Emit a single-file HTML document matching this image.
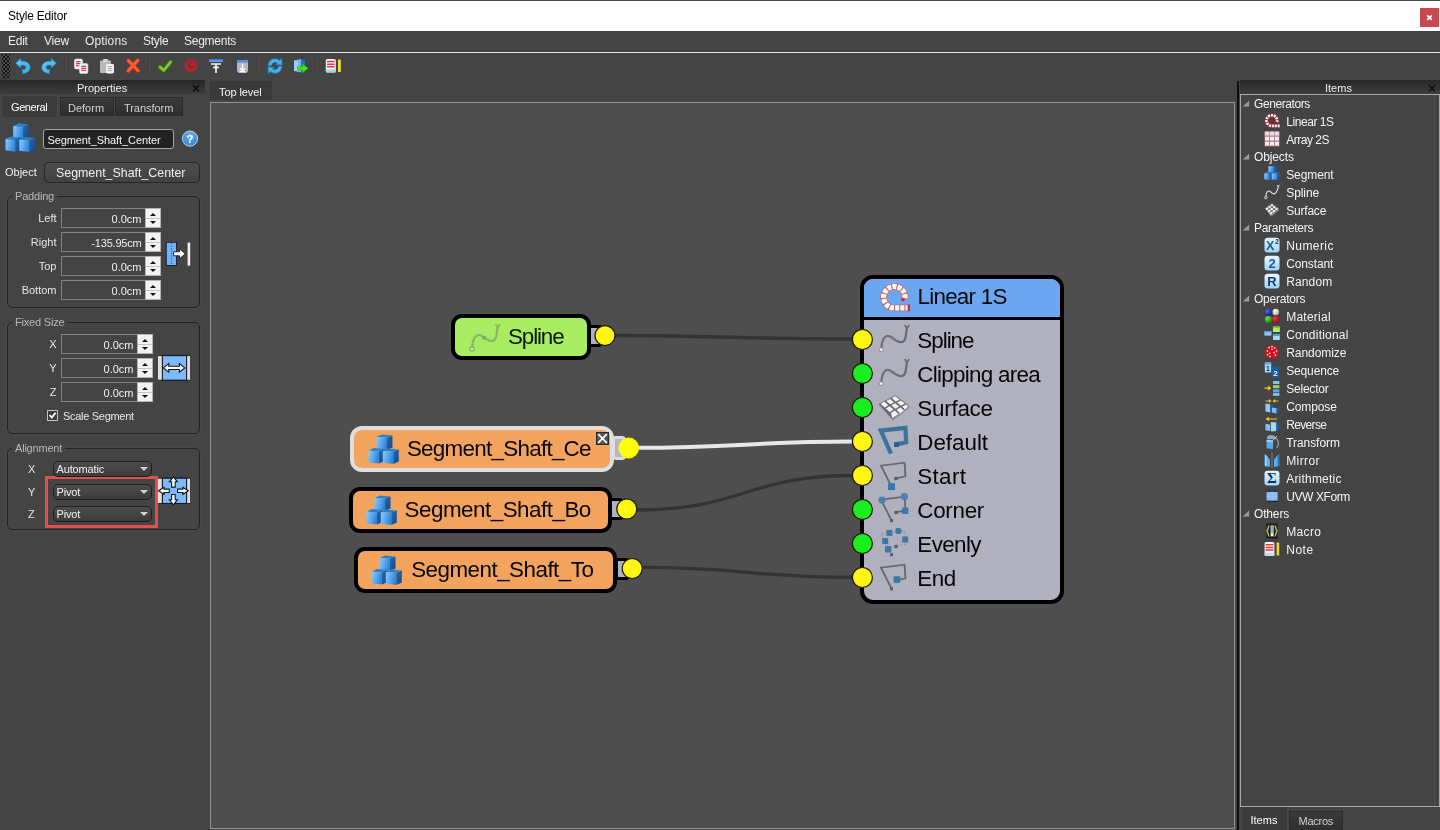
<!DOCTYPE html>
<html lang="en">
<head>
<meta charset="utf-8">
<title>Style Editor</title>
<style>
*{box-sizing:border-box;margin:0;padding:0}
html,body{width:1440px;height:830px;overflow:hidden;background:#444;}
body{font-family:"Liberation Sans","DejaVu Sans",sans-serif;font-size:12px;color:#e4e4e4;position:relative;}
#root{position:absolute;left:0;top:0;width:1440px;height:830px;overflow:hidden;will-change:transform;background:#444}
.abs{position:absolute}
.t{position:absolute;white-space:nowrap;line-height:14px;}
#titlebar{position:absolute;left:0;top:0;width:1440px;height:31px;background:#fff;border-top:1px solid #4a4a4a;}
#titlebar .t{color:#000;left:8px;top:8px;font-size:12px;letter-spacing:-0.2px}
#closebtn{position:absolute;left:1420px;top:8px;width:19px;height:19px;background:#c9474f;}
#menubar{position:absolute;left:0;top:31px;width:1440px;height:21px;background:#444;}
#menubar .t{top:3px;font-size:12px;color:#ececec;letter-spacing:-0.25px}
#menuline{position:absolute;left:0;top:52px;width:1440px;height:1px;background:#e8e8e8;}
#toolbar{position:absolute;left:0;top:53px;width:1440px;height:27px;background:#444;}
.sep{position:absolute;top:4px;width:1px;height:18px;background:#4d4d4d;box-shadow:-1px 0 0 #3e3e3e}
.ico{position:absolute;width:16px;height:16px;}
.hdr{position:absolute;height:14px;background:linear-gradient(#262626,#343434 55%,#3c3c3c);}
.hdr .t{top:0;font-size:12px;color:#f0f0f0;}
.tab{position:absolute;background:linear-gradient(#3a3a3a,#2f2f2f);border:1px solid #2c2c2c;color:#d0d0d0;font-size:12px;}
.tab.on{background:#3b3b3b;color:#fff;border-color:#4a4a4a;border-bottom:none;}
.grp{position:absolute;border:1px solid #222;border-radius:5px;box-shadow:0 0 0 0.5px #4e4e4e}
.grp .lg{position:absolute;top:-8px;left:4px;padding:0 3px;background:#444;color:#b8b8b8;font-size:11px;line-height:14px;white-space:nowrap;letter-spacing:-0.2px}
.lbl{position:absolute;font-size:11px;line-height:14px;color:#e6e6e6;white-space:nowrap;text-align:right}
.num{position:absolute;height:20px;border:1px solid #828282;background:#444;color:#f0f0f0;font-size:11px;line-height:20.5px;text-align:right;padding-right:3.5px;white-space:nowrap}
.spin{position:absolute;width:16px;height:20px;background:#f2f2f2;border:1px solid #b4b4b4;}
.spin:before,.spin:after{content:"";position:absolute;left:4px;border-left:3px solid transparent;border-right:3px solid transparent;}
.spin:before{top:4px;border-bottom:3.5px solid #111;}
.spin:after{bottom:3.5px;border-top:3.5px solid #111;}
.spin i{position:absolute;left:0;right:0;top:8.5px;height:1px;background:#c4c4c4}
.dd{position:absolute;height:16px;border:1px solid #1e1e1e;border-radius:5px;background:linear-gradient(#4c4c4c,#3c3c3c);color:#f2f2f2;font-size:11px;line-height:15.5px;padding-left:2.5px;white-space:nowrap;letter-spacing:-0.15px}
.dd:after{content:"";position:absolute;right:3.5px;top:5px;border-left:4px solid transparent;border-right:4px solid transparent;border-top:4px solid #d2d2d2;}
#canvas{position:absolute;left:210px;top:102px;width:1025px;height:727px;background:#4e4e4e;border:1px solid #929292;}
.node{position:absolute;border:3px solid #000;border-radius:11px;}
.node .t{color:#060606;font-size:22.4px;line-height:24px;}
.li{position:absolute;left:1286.2px;font-size:12px;line-height:14px;color:#f4f4f4;white-space:nowrap;}
.cat{position:absolute;left:1254px;font-size:12px;line-height:14px;color:#f4f4f4;white-space:nowrap;}
.tri{position:absolute;left:1244px;width:0;height:0;border-left:5px solid transparent;border-bottom:5px solid #8a8a8a;}
</style>
</head>
<body>
<div id="root">

<!-- Title bar -->
<div id="titlebar"><span class="t">Style Editor</span>
</div>
<div id="closebtn"><svg width="19" height="19" viewBox="0 0 19 19"><path d="M7.2 7.3 L11.8 11.9 M11.8 7.3 L7.2 11.9" stroke="#fff" stroke-width="1.7" fill="none"/></svg></div>
<!-- Menu bar -->
<div id="menubar">
<span class="t" style="left:8px">Edit</span>
<span class="t" style="left:44px">View</span>
<span class="t" style="left:85px;letter-spacing:0.15px">Options</span>
<span class="t" style="left:143px">Style</span>
<span class="t" style="left:184px">Segments</span>
</div>
<div id="menuline"></div>

<!-- Toolbar -->
<div id="toolbar">
<svg class="abs" style="left:1px;top:1px" width="10" height="25" viewBox="0 0 10 25">
<defs><linearGradient id="ublue" x1="0" y1="0" x2="1" y2="1"><stop offset="0" stop-color="#64d0fc"/><stop offset="1" stop-color="#34a8ea"/></linearGradient><pattern id="grip" width="4" height="4" patternUnits="userSpaceOnUse"><rect x="0" y="0" width="2" height="2" fill="#141414"/><rect x="2" y="2" width="2" height="2" fill="#141414"/></pattern></defs>
<rect x="1" y="0" width="8" height="25" fill="#4e4e4e"/><rect x="1" y="0" width="8" height="25" fill="url(#grip)"/></svg>
<!-- undo -->
<svg class="ico" style="left:15px;top:5px" viewBox="0 0 16 16"><path d="M0.6 5.2 L5.8 0.6 L5.8 3.3 C10.5 2.6 15.4 5 15.2 9.6 C15 13.4 11.6 15.6 7.4 15.4 L7.4 11.6 C9.6 11.8 11 10.8 11 9.3 C11 7.6 8.6 6.7 5.8 7.2 L5.8 9.8 Z" fill="url(#ublue)" stroke="#2a8cc8" stroke-width="0.6"/></svg>
<!-- redo -->
<svg class="ico" style="left:41px;top:5px" viewBox="0 0 16 16"><path d="M15.4 5.2 L10.2 0.6 L10.2 3.3 C5.5 2.6 0.6 5 0.8 9.6 C1 13.4 4.4 15.6 8.6 15.4 L8.6 11.6 C6.4 11.8 5 10.8 5 9.3 C5 7.6 7.4 6.7 10.2 7.2 L10.2 9.8 Z" fill="url(#ublue)" stroke="#2a8cc8" stroke-width="0.6"/></svg>
<div class="sep" style="left:65px"></div>
<!-- copy -->
<svg class="ico" style="left:73px;top:5px" viewBox="0 0 16 16"><rect x="1.5" y="1" width="8" height="10" rx="1.5" fill="#f4f4f4" stroke="#d8e6e6" stroke-width="0.6"/><path d="M3 3.6h4.6M3 5.6h4.6M3 7.6h3" stroke="#e0325a" stroke-width="1.1"/><rect x="6.5" y="5.5" width="8.4" height="10" rx="1.5" fill="#f2f6f6" stroke="#c8dede" stroke-width="0.6"/><path d="M8.2 8.4h5M8.2 10.4h5M8.2 12.4h5" stroke="#e0325a" stroke-width="1.1"/></svg>
<!-- paste -->
<svg class="ico" style="left:99px;top:5px" viewBox="0 0 16 16"><rect x="1" y="2.5" width="11" height="12.5" rx="1" fill="#b9b9b9"/><rect x="4" y="1" width="5" height="3" rx="1" fill="#d4d4d4"/><rect x="7" y="6" width="8" height="9.4" rx="1.4" fill="#f4f4f4"/><path d="M8.6 8.6h4.8M8.6 10.6h4.8M8.6 12.6h4.8" stroke="#a8a8a8" stroke-width="1"/></svg>
<!-- delete -->
<svg class="ico" style="left:125px;top:5px" viewBox="0 0 16 16"><path d="M3.4 2.6 L13 12.6 M12.8 2.4 L3.2 12.8" stroke="#d83828" stroke-width="4" stroke-linecap="round" fill="none"/><path d="M3.4 2.6 L13 12.6 M12.8 2.4 L3.2 12.8" stroke="#f8622e" stroke-width="2.6" stroke-linecap="round" fill="none"/></svg>
<div class="sep" style="left:149px"></div>
<!-- check -->
<svg class="ico" style="left:157px;top:5px" viewBox="0 0 16 16"><path d="M3 9 L6.8 12.4 L13.6 4" stroke="#4e9010" stroke-width="3.8" stroke-linecap="round" stroke-linejoin="round" fill="none"/><path d="M3 9 L6.8 12.4 L13.6 4" stroke="#86cc2c" stroke-width="2.2" stroke-linecap="round" stroke-linejoin="round" fill="none"/></svg>
<!-- stop -->
<svg class="ico" style="left:183px;top:5px" viewBox="0 0 16 16"><circle cx="8" cy="7.6" r="6.8" fill="#b02434" opacity="0.9"/><circle cx="8" cy="7.6" r="2.6" fill="#6a3430"/><circle cx="9" cy="6.4" r="1.2" fill="#e02428"/></svg>
<!-- move top -->
<svg class="ico" style="left:208px;top:5px" viewBox="0 0 16 16"><rect x="1" y="1.4" width="14" height="2.6" fill="#5a9cec"/><rect x="3" y="5" width="10" height="2" fill="#c8c8d4"/><path d="M8 6v9M5.2 9.4h5.6" stroke="#fff" stroke-width="1.6" fill="none"/></svg>
<!-- move bottom -->
<svg class="ico" style="left:234px;top:5px" viewBox="0 0 16 16"><path d="M3 2h11v11l-1.6 2H4.6L3 13z" fill="#b6b6c6"/><rect x="3" y="2" width="11" height="2.6" fill="#5a8cec"/><path d="M8.5 5.6v7M6 10.2l2.5 2.6 2.5-2.6M5.6 13.6h5.8" stroke="#fff" stroke-width="1.4" fill="none"/></svg>
<div class="sep" style="left:258px"></div>
<!-- refresh -->
<svg class="ico" style="left:266px;top:4px;width:18px;height:18px" viewBox="0 0 18 18"><path d="M2.2 8.4 A6.8 6.8 0 0 1 13.6 3.6 L15.6 1.6 L16 8 L9.8 7.6 L11.6 5.8 A4 4 0 0 0 5.4 8.4 Z" fill="#44b6ea" stroke="#2a8cc8" stroke-width="0.9"/><path d="M15.8 9.6 A6.8 6.8 0 0 1 4.4 14.4 L2.4 16.4 L2 10 L8.2 10.4 L6.4 12.2 A4 4 0 0 0 12.6 9.6 Z" fill="#44b6ea" stroke="#2a8cc8" stroke-width="0.9"/></svg>
<!-- export -->
<svg class="ico" style="left:292px;top:5px" viewBox="0 0 16 16"><path d="M2 2.6 L9 1 L9 14.6 L2 13 Z" fill="#78b4f0"/><path d="M9 1 L13 2.4 L13 13.4 L9 14.6 Z" fill="#2a6eb4"/><path d="M2 2.6 L6 3.6 L6 12.4 L2 13 Z" fill="#a0ccf6"/><path d="M5.6 8.8 H10.6 V6 L16.2 10.4 L10.6 14.8 V12 H5.6 Z" fill="#3ce610" stroke="#28b400" stroke-width="0.5"/></svg>
<div class="sep" style="left:316px"></div>
<!-- note -->
<svg class="ico" style="left:325px;top:5px;width:17px" viewBox="0 0 17 16"><rect x="0.8" y="1" width="10" height="13.6" rx="1.6" fill="#f6f6f6"/><rect x="0.8" y="11.6" width="10" height="3" rx="1.2" fill="#9ad8de"/><path d="M2 3.6h7.6M2 6.2h7.6M2 8.8h7.6" stroke="#e4385a" stroke-width="1.5"/><rect x="13" y="1.6" width="2.8" height="12.4" fill="#f0dc3c"/></svg>
</div>

<!-- Properties panel -->
<div class="hdr" style="left:0;top:80px;width:205px"><span class="t" style="left:77px;font-size:11px;line-height:14px;top:0.5px">Properties</span>
<svg class="abs" style="left:191px;top:3px" width="10" height="10" viewBox="0 0 10 10"><path d="M2 2.4 L8 8.4 M8 2.4 L2 8.4" stroke="#101010" stroke-width="1.5"/></svg></div>
<div class="tab on" style="left:1px;top:95px;width:57px;height:22px"><span class="t" style="left:9px;top:4px;font-size:11px;letter-spacing:-0.4px">General</span></div>
<div class="tab" style="left:60px;top:97px;width:54px;height:19px"><span class="t" style="left:7px;top:2.5px;font-size:11px">Deform</span></div>
<div class="tab" style="left:115px;top:97px;width:68px;height:19px"><span class="t" style="left:8px;top:2.5px;font-size:11px;letter-spacing:-0.05px">Transform</span></div>

<!-- segment icon big -->
<svg class="abs" style="left:4.5px;top:122px" width="31" height="31" viewBox="0 0 32 32">
<defs>
<linearGradient id="cbL" x1="0" y1="0" x2="1" y2="0.3"><stop offset="0" stop-color="#86ccfc"/><stop offset="0.55" stop-color="#58a8f0"/><stop offset="1" stop-color="#3484d6"/></linearGradient>
<linearGradient id="cbR" x1="0" y1="0" x2="1" y2="1"><stop offset="0" stop-color="#2468b2"/><stop offset="1" stop-color="#154a88"/></linearGradient>
<g id="cube"><path d="M0 3 L5.5 0.4 L16 1.5 L10.5 3.8 Z" fill="#2f80ca"/><path d="M0 3 L10.5 3.8 L10.5 16 L0 14.6 Z" fill="url(#cbL)"/><path d="M10.5 3.8 L16 1.5 L16 13.4 L10.5 16 Z" fill="url(#cbR)"/></g>
<g id="cubes"><use href="#cube" x="8.5" y="1"/><use href="#cube" x="0.5" y="14.6"/><use href="#cube" x="14.8" y="15"/></g>
</defs>
<use href="#cubes"/>
</svg>
<div class="abs" style="left:43px;top:129px;width:131px;height:20px;border:1px solid #a4a4a4;border-radius:3px;background:#222"><span class="t" style="left:3.5px;top:2.5px;font-size:11px;color:#f6f6f6;letter-spacing:-0.1px">Segment_Shaft_Center</span></div>
<!-- help -->
<svg class="abs" style="left:181px;top:130px" width="18" height="18" viewBox="0 0 18 18"><defs><radialGradient id="hg" cx="0.5" cy="0.3" r="0.8"><stop offset="0" stop-color="#6cb4f0"/><stop offset="1" stop-color="#2a78c8"/></radialGradient></defs><circle cx="9" cy="8.6" r="7.6" fill="url(#hg)" stroke="#b4d8f4" stroke-width="1"/><text x="9" y="12.6" text-anchor="middle" font-family="Liberation Sans, sans-serif" font-weight="bold" font-size="11.5" fill="#fff">?</text></svg>
<span class="lbl" style="left:5px;top:165px;text-align:left;color:#f0f0f0">Object</span>
<div class="abs" style="left:44px;top:162px;width:156px;height:21px;border:1px solid #262626;border-radius:5px;background:linear-gradient(#4c4c4c,#424242)"><span class="t" style="left:11px;top:2.5px;font-size:12.4px;color:#f0f0f0">Segment_Shaft_Center</span></div>

<!-- Padding -->
<div class="grp" style="left:7px;top:196px;width:193px;height:112px"><span class="lg">Padding</span></div>
<span class="lbl" style="left:9.5px;width:47px;top:211px">Left</span>
<span class="lbl" style="left:9.5px;width:47px;top:235px">Right</span>
<span class="lbl" style="left:9.5px;width:47px;top:259px">Top</span>
<span class="lbl" style="left:9.5px;width:47px;top:283px">Bottom</span>
<div class="num" style="left:61px;top:208px;width:85px">0.0cm</div><div class="spin" style="left:145px;top:208px"><i></i></div>
<div class="num" style="left:61px;top:232px;width:85px"><span style="letter-spacing:-0.2px">-135.95cm</span></div><div class="spin" style="left:145px;top:232px"><i></i></div>
<div class="num" style="left:61px;top:256px;width:85px">0.0cm</div><div class="spin" style="left:145px;top:256px"><i></i></div>
<div class="num" style="left:61px;top:280px;width:85px">0.0cm</div><div class="spin" style="left:145px;top:280px"><i></i></div>
<svg class="abs" style="left:165px;top:242px" width="26" height="24" viewBox="0 0 26 24"><rect x="1.2" y="0.3" width="10.4" height="23.2" fill="#74b2f8" stroke="#10182a" stroke-width="0.9"/><path d="M6.6 1v22" stroke="#2a4a90" stroke-width="1" stroke-dasharray="1 1.5"/><path d="M8.6 9.8 h6 v-3 l5.6 5 l-5.6 5 v-3 h-6 z" fill="#fff" stroke="#1a1a1a" stroke-width="0.9"/><rect x="22.6" y="0.6" width="2.6" height="23" fill="#f0f0f0"/></svg>

<!-- Fixed Size -->
<div class="grp" style="left:7px;top:322px;width:193px;height:112px"><span class="lg">Fixed Size</span></div>
<span class="lbl" style="left:9.5px;width:47px;top:337px">X</span>
<span class="lbl" style="left:9.5px;width:47px;top:361px">Y</span>
<span class="lbl" style="left:9.5px;width:47px;top:385px">Z</span>
<div class="num" style="left:61px;top:334px;width:77px">0.0cm</div><div class="spin" style="left:137px;top:334px"><i></i></div>
<div class="num" style="left:61px;top:358px;width:77px">0.0cm</div><div class="spin" style="left:137px;top:358px"><i></i></div>
<div class="num" style="left:61px;top:382px;width:77px">0.0cm</div><div class="spin" style="left:137px;top:382px"><i></i></div>
<svg class="abs" style="left:158px;top:355px" width="32" height="26" viewBox="0 0 32 26"><rect x="0" y="0.6" width="32" height="24.6" fill="#e2dede"/><path d="M0 0.6h32M0 25.2h32" stroke="#1a1a1a" stroke-width="0.9"/><rect x="4.4" y="0.6" width="24.2" height="24.6" fill="#7cbafa" stroke="#10182a" stroke-width="1.1"/><path d="M5.4 12.9 l5.4 -4.3 v2.7 h10.6 v-2.7 l5.4 4.3 l-5.4 4.3 v-2.7 h-10.6 v2.7 z" fill="#fcfcf8" stroke="#10141c" stroke-width="1.1" stroke-linejoin="miter"/></svg>
<div class="abs" style="left:47px;top:410px;width:11px;height:11px;background:#3c3c3c;border:1px solid #c4c4c4"><svg class="abs" style="left:0;top:0" width="9" height="9" viewBox="0 0 9.5 9.5"><path d="M1.8 4.2 L4 7 L8 1.8" stroke="#fff" stroke-width="1.9" fill="none"/></svg></div>
<span class="lbl" style="left:63px;top:409px;text-align:left;letter-spacing:-0.3px">Scale Segment</span>

<!-- Alignment -->
<div class="grp" style="left:7px;top:448px;width:193px;height:82px"><span class="lg">Alignment</span></div>
<span class="lbl" style="left:28px;top:462px;text-align:left">X</span>
<span class="lbl" style="left:28px;top:485px;text-align:left">Y</span>
<span class="lbl" style="left:28px;top:507px;text-align:left">Z</span>
<div class="abs" style="left:45px;top:476px;width:113px;height:52px;border:3px solid #e2504e"></div>
<div class="dd" style="left:53px;top:460.5px;width:99px">Automatic</div>
<div class="dd" style="left:53px;top:483.5px;width:99px">Pivot</div>
<div class="dd" style="left:53px;top:506px;width:99px">Pivot</div>
<svg class="abs" style="left:158px;top:476px" width="32" height="30" viewBox="0 0 32 30"><rect x="0" y="2.2" width="32" height="25.3" fill="#e2dede"/><path d="M0 2.2h32M0 27.5h32" stroke="#1a1a1a" stroke-width="0.9"/><rect x="4.4" y="2.2" width="24.2" height="25.3" fill="#7cbafa" stroke="#10182a" stroke-width="1.1"/>
<g fill="#fcfcf8" stroke="#10141c" stroke-width="1.1"><path d="M15.4 0.7 L19.4 5.8 L17.2 5.8 L17.2 11.1 L13.6 11.1 L13.6 5.8 L11.4 5.8 Z"/><path d="M15.4 28.9 L19.4 23.8 L17.2 23.8 L17.2 18.5 L13.6 18.5 L13.6 23.8 L11.4 23.8 Z"/><path d="M0.6 14.8 L6 11.2 L6 13.1 L11.3 13.1 L11.3 16.5 L6 16.5 L6 18.4 Z"/><path d="M30.3 14.8 L24.9 11.2 L24.9 13.1 L19.6 13.1 L19.6 16.5 L24.9 16.5 L24.9 18.4 Z"/></g></svg>

<!-- Center: tab + canvas -->
<div class="abs" style="left:210px;top:81px;width:62px;height:19px;background:#3a3a3a;"><span class="t" style="left:9px;top:4px;font-size:11px;color:#f4f4f4;letter-spacing:-0.1px">Top level</span></div>
<div id="canvas"></div>

<!-- wires & ports -->
<svg class="abs" style="left:0;top:0" width="1440" height="830" viewBox="0 0 1440 830">
<g fill="none" stroke-width="3.4" stroke-linecap="butt">
<path d="M612 335.5 C 733 335.5, 733 339, 854 339" stroke="#333"/>
<path d="M636 510 C 744 510, 746 475.5, 854 475.5" stroke="#333"/>
<path d="M640 567.4 C 748 567.4, 746 577.3, 854 577.3" stroke="#333"/>
<path d="M636 447.8 C 740 447.8, 750 441.6, 854 441.6" stroke="#e8e8e8" stroke-width="4"/>
</g>
</svg>

<!-- Spline node -->
<div class="abs" style="left:588px;top:325px;width:14px;height:21.5px;background:#b0b0c0;border:3px solid #000;border-radius:3px"></div>
<div class="node" style="left:451px;top:314px;width:140px;height:46px;background:#a8ec62;border-width:4px"><span class="t" style="left:53.0px;top:6.5px;color:#0a1400;letter-spacing:-1.13px">Spline</span>
<svg class="abs" style="left:11.5px;top:3.5px" width="36" height="32" viewBox="0 0 36 32"><g opacity="0.8"><path d="M5.2 25.5 C 5.6 18, 7 14, 11 13 C 15 12.5, 17 16, 21 18 C 25 20, 28 19, 29.2 14.5 C 30 10.5, 30.3 7.5, 30.8 4" fill="none" stroke="#7ea86a" stroke-width="2.2"/><circle cx="5" cy="27" r="2.2" fill="#d4f4b4" stroke="#7c9c6c" stroke-width="1.2"/><path d="M28.4 2 l2.4 3.6 l2.4 -3.6" fill="none" stroke="#7ea86a" stroke-width="1.6"/><rect x="15.6" y="14.2" width="3.2" height="3.2" fill="#6c8c88"/></g></svg>
</div>

<!-- Segment nodes -->
<div class="abs" style="left:612px;top:436px;width:14px;height:24px;background:#b4b4c4;border:3px solid #dcdcdc;border-radius:4px"></div>
<div class="node" style="left:350px;top:426px;width:264px;height:46px;background:#f2a45e;border-color:#dcdee0;border-width:4px;border-radius:12px"><span class="t" style="left:52.9px;top:6.5px;letter-spacing:-0.72px">Segment_Shaft_Ce</span>
<svg class="abs" style="left:14px;top:3px" width="32" height="32" viewBox="0 0 32 32"><use href="#cubes"/></svg>
<div class="abs" style="left:242px;top:2px;width:13px;height:13px;background:#555;border:1px solid #2a2a2a"><svg class="abs" style="left:0;top:0" width="11" height="11" viewBox="0 0 11 11"><path d="M1.2 1.2 L9.8 9.8 M9.8 1.2 L1.2 9.8" stroke="#fff" stroke-width="1.7"/></svg></div>
</div>

<div class="abs" style="left:609px;top:498px;width:14px;height:22px;background:#b0b0c0;border:3px solid #000;border-radius:3px"></div>
<div class="node" style="left:349px;top:487px;width:263px;height:46px;background:#f2a45e;border-width:4px"><span class="t" style="left:51.6px;top:6.5px;letter-spacing:-0.5px">Segment_Shaft_Bo</span>
<svg class="abs" style="left:13px;top:3px" width="32" height="32" viewBox="0 0 32 32"><use href="#cubes"/></svg>
</div>

<div class="abs" style="left:614.5px;top:558px;width:14.5px;height:22px;background:#b0b0c0;border:3px solid #000;border-radius:3px"></div>
<div class="node" style="left:354px;top:547px;width:263px;height:46px;background:#f2a45e;border-width:4px"><span class="t" style="left:53.2px;top:6.5px;letter-spacing:-0.52px">Segment_Shaft_To</span>
<svg class="abs" style="left:13px;top:3px" width="32" height="32" viewBox="0 0 32 32"><use href="#cubes"/></svg>
</div>

<!-- Linear 1S node -->
<div class="node" style="left:860px;top:275px;width:204px;height:329px;background:#b0b0be;border-width:4px;border-radius:13px;overflow:hidden">
<div class="abs" style="left:0;top:0;width:196px;height:38px;background:#6ca6f0"></div>
<div class="abs" style="left:0;top:38px;width:196px;height:3.4px;background:#000"></div>
<span class="t" style="left:53.5px;top:5.5px;letter-spacing:-0.75px">Linear 1S</span>
<span class="t" style="left:53.3px;top:49.5px;letter-spacing:-1.01px">Spline</span>
<span class="t" style="left:53.3px;top:83.5px;letter-spacing:-0.71px">Clipping area</span>
<span class="t" style="left:53.3px;top:117.5px;letter-spacing:-0.24px">Surface</span>
<span class="t" style="left:53.3px;top:151.5px;letter-spacing:-0.03px">Default</span>
<span class="t" style="left:53.3px;top:185.5px;letter-spacing:0.33px">Start</span>
<span class="t" style="left:53.3px;top:219.5px;letter-spacing:-0.29px">Corner</span>
<span class="t" style="left:53.3px;top:253.5px;letter-spacing:-0.59px">Evenly</span>
<span class="t" style="left:53.3px;top:287.5px;letter-spacing:-0.44px">End</span>
</div>

<svg class="abs" style="left:0;top:0" width="1440" height="830" viewBox="0 0 1440 830">
<defs>
<g id="isp"><path d="M2.4 23.5 C 2.8 17, 4 12.5, 8 11.5 C 12 11, 14 14.5, 18 16.5 C 22 18.5, 25.5 18, 26.5 13 C 27.3 9, 27.5 6, 28 2.5" fill="none" stroke="#6c6c76" stroke-width="2.2"/><path d="M25.8 0.5 L28 4 L30.2 0.5" fill="none" stroke="#6c6c76" stroke-width="1.7"/><rect x="12.5" y="12.4" width="3" height="3" fill="#7a7a90"/><circle cx="2.2" cy="25.2" r="1.9" fill="#f4f4f8" stroke="#8a8a98" stroke-width="1"/></g>
<path id="ipoly" d="M12.5 26 L2 5.2 L25.6 2.2 L26.4 15.8 L17 17.9" fill="none"/>
</defs>
<use href="#isp" x="879" y="324.5"/>
<use href="#isp" x="879" y="358.5"/>
<!-- surface -->
<g transform="translate(878,394)"><path d="M0.5 10 L17.5 1.2 L31.2 12 L14 25.2 Z" fill="#6a6a6e"/><path d="M14 25.2 L31.2 12 L31.2 14 L14.4 27 Z" fill="#8a8a92"/>
<g fill="#f4f4f4"><path d="M2.6 9.8 L6.4 7.8 L10.4 11.2 L6.6 13.4 Z"/><path d="M8.2 6.9 L12 4.9 L16 8.3 L12.2 10.3 Z"/><path d="M13.8 4 L17.4 2.2 L21.6 5.4 L17.8 7.4 Z"/>
<path d="M7.8 14.4 L11.6 12.2 L15.6 15.6 L11.8 18 Z"/><path d="M13.4 11.3 L17.2 9.3 L21.2 12.6 L17.4 14.7 Z"/><path d="M19 8.4 L22.8 6.4 L26.8 9.6 L23 11.7 Z"/>
<path d="M13 19 L16.8 16.6 L20.6 20 L14.2 24 Z"/><path d="M18.6 15.7 L22.4 13.6 L26 16.6 L22 19.4 Z"/><path d="M24.2 12.7 L28 10.6 L30.2 12.2 L27.2 15.6 Z"/></g></g>
<!-- default -->
<g transform="translate(879,427)"><path d="M12 26.6 L1.8 3.6 L26.4 0.8 L27.2 15.4 L17.4 17.4" fill="none" stroke="#3a739c" stroke-width="4.2" stroke-linejoin="miter"/><rect x="15" y="15" width="5" height="5" fill="#2c628c"/></g>
<!-- start -->
<g transform="translate(879,460.5)"><use href="#ipoly" stroke="#686872" stroke-width="1.8"/><rect x="15.4" y="16.4" width="3.2" height="3.2" fill="#5a5a68"/><rect x="9" y="22.6" width="7" height="7" fill="#3a78a8"/></g>
<!-- corner -->
<g transform="translate(879,494.5)"><use href="#ipoly" stroke="#686872" stroke-width="1.8"/><circle cx="3" cy="5.6" r="3.6" fill="#4a82b4"/><circle cx="25.4" cy="2.2" r="3.6" fill="#4a82b4"/><rect x="23" y="13" width="6.4" height="6.4" fill="#3a78a8"/><rect x="15.4" y="16.4" width="3.2" height="3.2" fill="#5a5a68"/><rect x="11" y="24.6" width="3" height="3" fill="#5a5a68"/></g>
<!-- evenly -->
<g transform="translate(879,528.5)"><use href="#ipoly" stroke="#8a8a98" stroke-width="1" stroke-dasharray="2 2"/><g fill="#3a78a8"><rect x="7.4" y="1.4" width="6" height="6"/><rect x="16.4" y="-0.4" width="6" height="6" rx="2"/><rect x="23.2" y="8" width="6" height="6"/><rect x="3.2" y="9.6" width="6" height="6"/><rect x="6" y="17.6" width="6.4" height="6.4"/></g><rect x="15.4" y="16.4" width="3.2" height="3.2" fill="#5a5a68"/><rect x="11" y="24.8" width="3" height="3" fill="#5a5a68"/></g>
<!-- end -->
<g transform="translate(879,562.5)"><use href="#ipoly" stroke="#686872" stroke-width="1.8"/><rect x="14.6" y="13.8" width="6.6" height="6.6" fill="#3a78a8"/><rect x="11" y="24.8" width="3" height="3" fill="#5a5a68"/></g>
<!-- header icon -->
<g transform="translate(879,282)" fill="none"><path d="M30.6 25.9 L15.3 25.95 A10.75 10.75 0 1 1 25.9 17.4" stroke="#b8686c" stroke-width="6.6"/><path d="M30.6 25.9 L15.3 25.95 A10.75 10.75 0 1 1 25.9 17.4" stroke="#f8f6f6" stroke-width="5.2" stroke-dasharray="4.1 1.1"/><circle cx="24" cy="17.6" r="1.9" fill="#e0243c"/><rect x="28.6" y="22.5" width="2.4" height="6.6" fill="#e02838"/></g>
<g stroke="#1a1a00" stroke-width="1.2">
<circle cx="605" cy="335.6" r="10" fill="#fff614"/>
<circle cx="628.7" cy="448" r="10.4" fill="#fefe06" stroke="none"/>
<circle cx="626.8" cy="509" r="10" fill="#fff614"/>
<circle cx="632.2" cy="568.5" r="10" fill="#fff614"/>
<circle cx="862.4" cy="339.5" r="10" fill="#fff614"/>
<circle cx="862.4" cy="373.5" r="10" fill="#1aee22"/>
<circle cx="862.4" cy="407.5" r="10" fill="#1aee22"/>
<circle cx="862.4" cy="441.5" r="10" fill="#fff614"/>
<circle cx="862.4" cy="475.5" r="10" fill="#fff614"/>
<circle cx="862.4" cy="509.5" r="10" fill="#1aee22"/>
<circle cx="862.4" cy="543.5" r="10" fill="#1aee22"/>
<circle cx="862.4" cy="577.5" r="10" fill="#fff614"/>
</g>
</svg>

<!-- Items panel -->
<svg class="abs" width="0" height="0" style="left:0;top:0"><defs>
<linearGradient id="bdg" x1="0" y1="0" x2="0" y2="1"><stop offset="0" stop-color="#e8f6ff"/><stop offset="0.5" stop-color="#c4e6fc"/><stop offset="1" stop-color="#9ed4f8"/></linearGradient>
<radialGradient id="sB" cx="0.35" cy="0.3" r="0.8"><stop offset="0" stop-color="#4a6af8"/><stop offset="1" stop-color="#0a148c"/></radialGradient>
<radialGradient id="sW" cx="0.35" cy="0.3" r="0.8"><stop offset="0" stop-color="#ffffee"/><stop offset="1" stop-color="#b4b48c"/></radialGradient>
<radialGradient id="sG" cx="0.35" cy="0.3" r="0.8"><stop offset="0" stop-color="#5af03a"/><stop offset="1" stop-color="#0a780a"/></radialGradient>
<radialGradient id="sR" cx="0.35" cy="0.3" r="0.8"><stop offset="0" stop-color="#f83a3a"/><stop offset="1" stop-color="#8c0a0a"/></radialGradient>
</defs></svg>
<div class="abs" style="left:1237px;top:81px;width:2px;height:749px;background:#0e0e0e"></div>
<div class="hdr" style="left:1239.5px;top:80px;width:201px"><span class="t" style="left:85.5px;font-size:11px;top:0.5px">Items</span><svg class="abs" style="left:187px;top:3px" width="10" height="10" viewBox="0 0 10 10"><path d="M2 2.4 L8 8.4 M8 2.4 L2 8.4" stroke="#101010" stroke-width="1.5"/></svg></div>
<div class="abs" style="left:1240px;top:94px;width:200px;height:713px;border:1px solid #a8a8a8;background:#444"></div>
<div class="abs" style="left:1434px;top:95px;width:1px;height:711px;background:#505050"></div>
<svg class="abs" style="left:1242px;top:99.5px" width="8" height="7" viewBox="0 0 8 7"><path d="M7.2 0.4 L7.2 6.4 L0.8 6.4 Z" fill="#9a9a9a"/></svg><span class="cat" style="top:96.5px;letter-spacing:-0.42px">Generators</span>
<span class="li" style="top:114.5px;letter-spacing:-0.43px">Linear 1S</span>
<svg class="ico" style="left:1264px;top:113px" viewBox="0 0 16 16"><circle cx="7.8" cy="7.6" r="4.4" fill="#6e2c2e"/><g fill="none"><path d="M15.6 12.9 L7.8 12.95 A5.35 5.35 0 1 1 13 8.9" stroke="#8e2c32" stroke-width="4"/><path d="M15.6 12.9 L7.8 12.95 A5.35 5.35 0 1 1 13 8.9" stroke="#fbf6f6" stroke-width="2.7" stroke-dasharray="2 0.9"/></g></svg>
<span class="li" style="top:132.5px;letter-spacing:-0.47px">Array 2S</span>
<svg class="ico" style="left:1264px;top:131px" viewBox="0 0 16 16"><rect x="0.6" y="0.6" width="14.8" height="14.8" fill="#d07468"/><g fill="#f4ecf2"><rect x="1" y="0.6" width="4" height="4"/><rect x="6" y="0.6" width="4" height="4"/><rect x="11" y="0.6" width="4" height="4"/><rect x="1" y="5.6" width="4" height="4"/><rect x="6" y="5.6" width="4" height="4"/><rect x="11" y="5.6" width="4" height="4"/><rect x="1" y="10.6" width="4" height="4"/><rect x="6" y="10.6" width="4" height="4"/><rect x="11" y="10.6" width="4" height="4"/></g><path d="M0.6 5.1h15M0.6 10.1h15M5.5 0.6v14.4M10.5 0.6v14.4" stroke="#a89098" stroke-width="0.9"/><rect x="0.6" y="0.6" width="14.8" height="4.2" fill="#d8b4d8" opacity="0.35"/></svg>
<svg class="abs" style="left:1242px;top:152.5px" width="8" height="7" viewBox="0 0 8 7"><path d="M7.2 0.4 L7.2 6.4 L0.8 6.4 Z" fill="#9a9a9a"/></svg><span class="cat" style="top:149.5px;letter-spacing:-0.12px">Objects</span>
<span class="li" style="top:167.5px;letter-spacing:-0.1px">Segment</span>
<svg class="ico" style="left:1264px;top:166px" viewBox="0 0 16 16"><g transform="translate(0,-2) scale(0.52)"><use href="#cubes"/></g></svg>
<span class="li" style="top:185.5px;letter-spacing:-0.06px">Spline</span>
<svg class="ico" style="left:1264px;top:184px" viewBox="0 0 16 16"><path d="M1.8 13 C 1.6 7.6, 4.6 5.6, 7 8.2 S 11.6 10.6, 13.2 6.4 S 14 3, 14.4 1.6" fill="none" stroke="#e6e6e6" stroke-width="1.1"/><circle cx="1.8" cy="13.6" r="1.2" fill="#444" stroke="#e6e6e6" stroke-width="0.9"/><path d="M13 1 l1.3 1.8 l1.3 -1.8" fill="none" stroke="#e6e6e6" stroke-width="0.8"/></svg>
<span class="li" style="top:203.5px;letter-spacing:-0.2px">Surface</span>
<svg class="ico" style="left:1264px;top:202px" viewBox="0 0 16 16"><path d="M0.8 6.4 L8 1.4 L15 7 L6.6 13.6 Z" fill="#f2f2f2"/><path d="M3.2 4.8 L9.6 11.2 M5.6 3.1 L12.4 9 M0.8 6.4 L6.6 13.6 M8 1.4 L15 7 M2.8 8.8 L10.4 3.4 M4.7 11.2 L12.7 5.2 M0.8 6.4 L8 1.4 M6.6 13.6 L15 7" stroke="#585858" stroke-width="0.9" fill="none"/><path d="M6.6 13.6 L15 7 L15 8.2 L6.8 14.8 Z" fill="#8a8a8a"/></svg>
<svg class="abs" style="left:1242px;top:223.5px" width="8" height="7" viewBox="0 0 8 7"><path d="M7.2 0.4 L7.2 6.4 L0.8 6.4 Z" fill="#9a9a9a"/></svg><span class="cat" style="top:220.5px;letter-spacing:-0.29px">Parameters</span>
<span class="li" style="top:238.5px;letter-spacing:0.43px">Numeric</span>
<svg class="ico" style="left:1264px;top:237px" viewBox="0 0 16 16"><rect x="0.5" y="0.8" width="15" height="14.6" rx="3.2" fill="url(#bdg)"/><text x="6.2" y="13" text-anchor="middle" font-family="Liberation Sans, sans-serif" font-weight="bold" font-size="12.5" fill="#1c5a9c">X</text><text x="13" y="7.2" text-anchor="middle" font-family="Liberation Sans, sans-serif" font-weight="bold" font-size="7" fill="#102a50">2</text></svg>
<span class="li" style="top:256.5px;letter-spacing:-0.11px">Constant</span>
<svg class="ico" style="left:1264px;top:255px" viewBox="0 0 16 16"><rect x="0.5" y="0.8" width="15" height="14.6" rx="3.2" fill="url(#bdg)"/><text x="8" y="13.2" text-anchor="middle" font-family="Liberation Sans, sans-serif" font-weight="bold" font-size="13" fill="#1c5a9c">2</text></svg>
<span class="li" style="top:274.5px;letter-spacing:0.14px">Random</span>
<svg class="ico" style="left:1264px;top:273px" viewBox="0 0 16 16"><rect x="0.5" y="0.8" width="15" height="14.6" rx="3.2" fill="url(#bdg)"/><text x="8" y="13.2" text-anchor="middle" font-family="Liberation Sans, sans-serif" font-weight="bold" font-size="13" fill="#103c70">R</text></svg>
<svg class="abs" style="left:1242px;top:294.5px" width="8" height="7" viewBox="0 0 8 7"><path d="M7.2 0.4 L7.2 6.4 L0.8 6.4 Z" fill="#9a9a9a"/></svg><span class="cat" style="top:291.5px;letter-spacing:-0.24px">Operators</span>
<span class="li" style="top:309.5px;letter-spacing:0.24px">Material</span>
<svg class="ico" style="left:1264px;top:308px" viewBox="0 0 16 16"><circle cx="4.4" cy="4.4" r="3.6" fill="url(#sB)"/><circle cx="11.8" cy="4" r="3.2" fill="url(#sW)"/><circle cx="4.4" cy="11.6" r="3.6" fill="url(#sG)"/><circle cx="11.8" cy="11.6" r="3.6" fill="url(#sR)"/></svg>
<span class="li" style="top:327.5px;letter-spacing:0.22px">Conditional</span>
<svg class="ico" style="left:1264px;top:326px" viewBox="0 0 16 16"><rect x="0.4" y="5" width="7" height="4.6" fill="#8cccf4"/><rect x="0.4" y="5" width="7" height="1.4" fill="#4a9ae0"/><rect x="9" y="0.6" width="6.8" height="5.4" fill="#b4f06a"/><rect x="9" y="0.6" width="6.8" height="1.6" fill="#6cd22a"/><rect x="9" y="8.4" width="6.8" height="5.6" fill="#a8d8f8"/><rect x="9" y="8.4" width="6.8" height="1.6" fill="#4a9ae0"/></svg>
<span class="li" style="top:345.5px;letter-spacing:-0.06px">Randomize</span>
<svg class="ico" style="left:1264px;top:344px" viewBox="0 0 16 16"><path d="M8 0.8 L14.4 4.2 L14 11.4 L8 15.2 L1.8 11.4 L1.6 4.2 Z" fill="#e4121e"/><path d="M8 7.6 L14.4 4.2 M8 7.6 L1.6 4.2 M8 7.6 L8 15.2" stroke="#a80a14" stroke-width="0.8"/><g fill="#fff"><circle cx="5" cy="3.6" r="0.8"/><circle cx="8" cy="2.6" r="0.8"/><circle cx="10.8" cy="4" r="0.8"/><circle cx="8" cy="5.2" r="0.8"/><circle cx="3.4" cy="7" r="0.8"/><circle cx="5.8" cy="9.2" r="0.8"/><circle cx="3.6" cy="10.8" r="0.8"/><circle cx="6" cy="12.6" r="0.8"/><circle cx="10" cy="8.6" r="0.8"/><circle cx="12.6" cy="7" r="0.8"/><circle cx="11.4" cy="11" r="0.8"/></g></svg>
<span class="li" style="top:363.5px;letter-spacing:-0.14px">Sequence</span>
<svg class="ico" style="left:1264px;top:362px" viewBox="0 0 16 16"><rect x="0.8" y="0.6" width="6.4" height="10" rx="0.8" fill="#a4d8f8"/><rect x="0.8" y="0.6" width="6.4" height="2" fill="#5ab0ee"/><text x="4" y="9" text-anchor="middle" font-family="Liberation Sans, sans-serif" font-weight="bold" font-size="7" fill="#0e3a78">1</text><rect x="7.6" y="4.4" width="8" height="11.2" rx="0.8" fill="#1e5c9c"/><text x="11.4" y="14" text-anchor="middle" font-family="Liberation Sans, sans-serif" font-weight="bold" font-size="8" fill="#eaf6ff">2</text></svg>
<span class="li" style="top:381.5px;letter-spacing:-0.21px">Selector</span>
<svg class="ico" style="left:1264px;top:380px" viewBox="0 0 16 16"><path d="M0.6 7.6 h3.6 v-2 l3 2.6 l-3 2.6 v-2 h-3.6 z" fill="#f4d21e"/><rect x="9" y="1" width="6.4" height="3" fill="#7cc4f4"/><rect x="9" y="5.2" width="6.4" height="3" fill="#8ce05a"/><rect x="9" y="9.4" width="6.4" height="3" fill="#5aa8f0"/><rect x="9" y="13.2" width="6.4" height="2.6" fill="#8cccf6"/></svg>
<span class="li" style="top:399.5px;letter-spacing:-0.1px">Compose</span>
<svg class="ico" style="left:1264px;top:398px" viewBox="0 0 16 16"><path d="M1.6 2.4 h3.4 v-1.4 l2.4 2 l-2.4 2 v-1.4 h-3.4 z M14.4 2.4 h-3.4 v-1.4 l-2.4 2 l2.4 2 v-1.4 h3.4 z" fill="#f0cc1e"/><path d="M1.4 5.6 L6.4 6.2 L6.4 14.4 L1.4 13.4 Z" fill="#8cc8f8"/><path d="M6.4 6.2 L8.6 5.8 L8.6 13.6 L6.4 14.4 Z" fill="#1e5ca0"/><path d="M8 9.4 L12.6 10.2 L12.6 15.6 L8 14.6 Z" fill="#7cc0f6"/><path d="M12.6 10.2 L14.6 9.6 L14.6 14.8 L12.6 15.6 Z" fill="#1e5ca0"/></svg>
<span class="li" style="top:417.5px;letter-spacing:-0.65px">Reverse</span>
<svg class="ico" style="left:1264px;top:416px" viewBox="0 0 16 16"><path d="M1.6 3 l3.2 -2.2 v1.6 h8.4 v1.2 h-8.4 v1.6 z" fill="#f0cc1e"/><path d="M1.4 7.8 L6 8.4 L6 15 L1.4 14.2 Z" fill="#7cc0f6"/><path d="M6.8 6 L12.4 6.4 L12.4 15 L6.8 15.4 Z" fill="#a4d8fa"/><path d="M12.4 6.4 L14.8 6 L14.8 14.4 L12.4 15 Z" fill="#1e5ca0"/></svg>
<span class="li" style="top:435.5px;letter-spacing:-0.06px">Transform</span>
<svg class="ico" style="left:1264px;top:434px" viewBox="0 0 16 16"><path d="M3 2.4 C 5 0.8, 9 0.8, 11 2.2 L11 5 L3 5.4 Z" fill="#9cc4e8" opacity="0.8"/><path d="M2.6 6 L9 6.4 L9 15 L2.6 14.2 Z" fill="#5aa8f0"/><path d="M2.6 6 L9 6.4 L9 8 L2.6 7.6 Z" fill="#a8d8fa"/><path d="M9.6 3.4 A 6 6 0 0 1 12.6 13.6" fill="none" stroke="#8a9aa8" stroke-width="1.2"/><path d="M9 6.4 L13 2" stroke="#c8d4dc" stroke-width="0.9"/></svg>
<span class="li" style="top:453.5px;letter-spacing:0.4px">Mirror</span>
<svg class="ico" style="left:1264px;top:452px" viewBox="0 0 16 16"><path d="M0.8 2.2 C 3 3.6, 5.4 6, 6 8 L6 15 L0.8 14 Z" fill="#5ab0f4"/><path d="M15.2 2.2 C 13 3.6, 10.6 6, 10 8 L10 15 L15.2 14 Z" fill="#5ab0f4"/><path d="M0.8 2.2 L2.6 4 L2.6 14.4 L0.8 14 Z" fill="#a0d4fa"/><path d="M15.2 2.2 L13.4 4 L13.4 14.4 L15.2 14 Z" fill="#2a7cc8"/><path d="M8 0.2 V15.8" stroke="#d0a878" stroke-width="0.6"/></svg>
<span class="li" style="top:471.5px;letter-spacing:0.21px">Arithmetic</span>
<svg class="ico" style="left:1264px;top:470px" viewBox="0 0 16 16"><rect x="0.5" y="0.8" width="15" height="14.6" rx="3.2" fill="url(#bdg)"/><text x="8" y="13.2" text-anchor="middle" font-family="Liberation Serif, serif" font-weight="bold" font-size="15" fill="#0c3468">Σ</text></svg>
<span class="li" style="top:489.5px;letter-spacing:-0.4px">UVW XForm</span>
<svg class="ico" style="left:1264px;top:488px" viewBox="0 0 16 16"><rect x="2.6" y="3.4" width="11" height="9.6" fill="#8cb8f2"/><path d="M2.4 3.2h11.4M2.4 13.2h11.4" stroke="#0c1830" stroke-width="1"/><path d="M2.6 8.2h11M8.1 3.6v9.2" stroke="#a4c8f6" stroke-width="0.7"/></svg>
<svg class="abs" style="left:1242px;top:509.5px" width="8" height="7" viewBox="0 0 8 7"><path d="M7.2 0.4 L7.2 6.4 L0.8 6.4 Z" fill="#9a9a9a"/></svg><span class="cat" style="top:506.5px;letter-spacing:-0.16px">Others</span>
<span class="li" style="top:524.5px;letter-spacing:0.35px">Macro</span>
<svg class="ico" style="left:1264px;top:523px" viewBox="0 0 16 16"><rect x="3" y="1" width="10" height="14" fill="#14140a" stroke="#1a1a10" stroke-width="1"/><path d="M5.4 2.6 C 3.6 2.6, 5 7.4, 2.6 8 C 5 8.6, 3.6 13.4, 5.4 13.4 M10.6 2.6 C 12.4 2.6, 11 7.4, 13.4 8 C 11 8.6, 12.4 13.4, 10.6 13.4" fill="none" stroke="#b4c050" stroke-width="1.5"/><rect x="6.6" y="2.4" width="3" height="11" fill="#f4f4f4"/><rect x="7.4" y="3" width="1.3" height="7" fill="#3a8ad8"/></svg>
<span class="li" style="top:542.5px;letter-spacing:0.53px">Note</span>
<svg class="ico" style="left:1264px;top:541px" viewBox="0 0 16 16"><rect x="0.6" y="1" width="9.8" height="14" rx="1.6" fill="#f6f6f6"/><rect x="0.6" y="11.8" width="9.8" height="3.2" rx="1.2" fill="#c4dcf0"/><path d="M1.6 3.8h7.8M1.6 6.4h7.8M1.6 9h7.8" stroke="#e4383c" stroke-width="1.5"/><rect x="12.6" y="1.6" width="2.6" height="13" rx="0.6" fill="#f0d23c"/></svg>
<div class="tab on" style="left:1241px;top:807px;width:47px;height:23px;border-top:none"><span class="t" style="left:8.5px;top:5.5px;font-size:11px">Items</span></div>
<div class="tab" style="left:1289px;top:810.5px;width:54px;height:20px"><span class="t" style="left:8.5px;top:2.5px;font-size:11px;letter-spacing:-0.25px">Macros</span></div>
</div>
</body>
</html>
